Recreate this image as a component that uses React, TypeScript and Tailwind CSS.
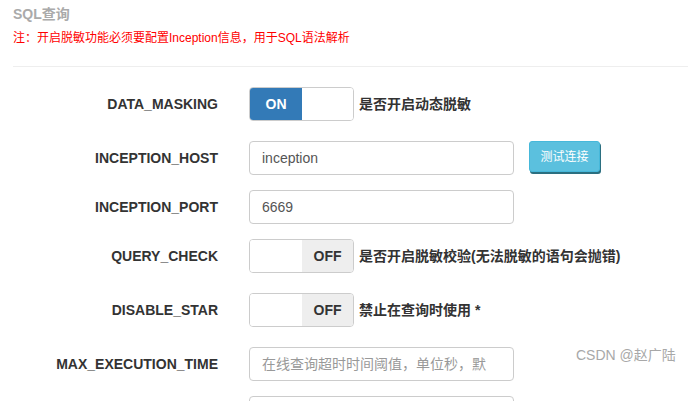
import React from 'react';

const cjk = "font-['Liberation_Sans','Noto_Sans_CJK_SC',sans-serif]";

function Toggle({ on }: { on: boolean }) {
  return (
    <div className="flex h-[34px] w-[105px] overflow-hidden rounded-[4px] border border-[#ccc] text-[14px] font-bold">
      {on ? (
        <>
          <div className="flex w-[52px] items-center justify-center bg-[#337ab7] text-white">ON</div>
          <div className="flex-1 bg-white" />
        </>
      ) : (
        <>
          <div className="w-[52px] bg-white" />
          <div className="flex flex-1 items-center justify-center bg-[#eee] text-[#333]">OFF</div>
        </>
      )}
    </div>
  );
}

function Row({
  label,
  children,
  mb,
}: {
  label: string;
  children: React.ReactNode;
  mb: string;
}) {
  return (
    <div className={`flex h-[34px] items-center ${mb}`}>
      <div className="w-[206px] pr-[1px] text-right text-[14px] font-bold text-[#333]">{label}</div>
      <div className="ml-[30px] flex items-center">{children}</div>
    </div>
  );
}

function TextInput({ value, placeholder }: { value?: string; placeholder?: string }) {
  return (
    <div className="flex h-[34px] w-[265px] items-center rounded-[4px] border border-[#ccc] bg-white px-[12px] text-[14px]">
      {value ? (
        <span className="text-[#555]">{value}</span>
      ) : (
        <span className="whitespace-nowrap text-[#999]">{placeholder}</span>
      )}
    </div>
  );
}

export default function App() {
  return (
    <div className={`relative h-[401px] w-[688px] overflow-hidden bg-white ${cjk}`}>
      <div className="pl-[13px] pt-[6px]">
        <div className="text-[14px] font-bold leading-[16px] text-[#aaa]">SQL查询</div>
        <div className="mt-[9px] text-[12px] leading-[14px] text-[#f00]">
          注：开启脱敏功能必须要配置Inception信息，用于SQL语法解析
        </div>
        <div className="mt-[21px] border-t border-[#eee]" />
      </div>

      <div className="pl-[13px] pt-[20px]">
        <Row label="DATA_MASKING" mb="mb-[20px]">
          <Toggle on />
          <span className="ml-[5px] text-[14px] font-bold text-[#333]">是否开启动态脱敏</span>
        </Row>
        <Row label="INCEPTION_HOST" mb="mb-[15px]">
          <TextInput value="inception" />
          <button className="ml-[15px] h-[31px] w-[71px] self-start rounded-[3px] border border-[#46b8da] bg-[#5bc0de] text-[12px] text-white shadow-[1px_2px_0_#2b6f80]">
            测试连接
          </button>
        </Row>
        <Row label="INCEPTION_PORT" mb="mb-[15px]">
          <TextInput value="6669" />
        </Row>
        <Row label="QUERY_CHECK" mb="mb-[20px]">
          <Toggle on={false} />
          <span className="ml-[5px] whitespace-nowrap text-[14px] font-bold text-[#333]">
            是否开启脱敏校验(无法脱敏的语句会抛错)
          </span>
        </Row>
        <Row label="DISABLE_STAR" mb="mb-[20px]">
          <Toggle on={false} />
          <span className="ml-[5px] text-[14px] font-bold text-[#333]">禁止在查询时使用 *</span>
        </Row>
        <Row label="MAX_EXECUTION_TIME" mb="mb-[15px]">
          <TextInput placeholder="在线查询超时时间阈值，单位秒，默" />
        </Row>
        <Row label="" mb="">
          <TextInput placeholder="" />
        </Row>
      </div>

      <div className="absolute left-[576px] top-[345px] text-[14px] text-[#a8a8a8]">CSDN @赵广陆</div>
    </div>
  );
}
